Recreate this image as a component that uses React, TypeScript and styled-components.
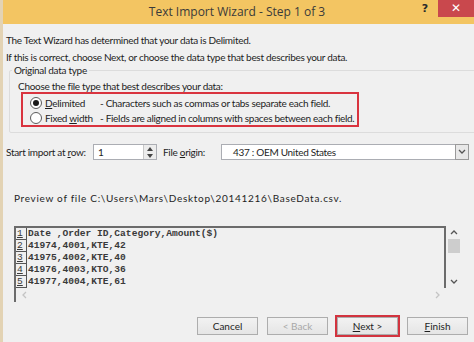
import React from 'react';
import styled, { createGlobalStyle } from 'styled-components';

const GlobalStyle = createGlobalStyle`
  html, body {
    margin: 0;
    padding: 0;
    overflow: hidden;
    background: #f0f0f0;
  }
  * { box-sizing: border-box; }
`;

const Window = styled.div`
  width: 474px;
  height: 342px;
  display: flex;
  flex-direction: column;
  background: #f0f0f0;
  border-left: 3px solid #e3d3b4;
  font-family: 'Lato', 'Liberation Sans', sans-serif;
  font-size: 10px;
  letter-spacing: -0.3px;
  color: #1e1e1e;
  overflow: hidden;
`;

const TitleBar = styled.div`
  height: 24px;
  flex: none;
  display: grid;
  grid-template-columns: 1fr auto 1fr;
  align-items: start;
  background: #f3c562;
  margin-left: -3px;
  letter-spacing: 0;
`;

const Title = styled.div`
  grid-column: 2;
  font-family: 'Open Sans', sans-serif;
  font-size: 12px;
  line-height: 24px;
  color: #3a3a3a;
`;

const TitleControls = styled.div`
  grid-column: 3;
  justify-self: end;
  display: flex;
  align-items: flex-start;
`;

const HelpButton = styled.div`
  width: 26px;
  height: 17px;
  font-family: 'DejaVu Sans', sans-serif;
  font-weight: bold;
  font-size: 11px;
  line-height: 17px;
  text-align: center;
  color: #2a2a2a;
`;

const CloseButton = styled.div`
  width: 36px;
  height: 17px;
  background: #c9484d;
  color: #fff;
  font-family: 'DejaVu Sans', sans-serif;
  font-weight: bold;
  font-size: 12px;
  line-height: 17px;
  text-align: center;
`;

const Body = styled.div`
  flex: 1;
  display: flex;
  flex-direction: column;
  padding: 8px 0 0 3px;
`;

const Line = styled.div`
  height: 17px;
  line-height: 17px;
  white-space: nowrap;
`;

const GroupBox = styled.fieldset`
  margin: -3px -12px 0 3px;
  padding: 0 0 5px 0;
  border: 1px solid #dcdcdc;
  border-radius: 2px;
  min-width: 0;
`;

const Legend = styled.legend`
  padding: 0 2px;
  margin-left: 2px;
  line-height: 14px;
  color: #1e1e1e;
`;

const GroupHint = styled.div`
  margin: 3px 0 0 8px;
  height: 12px;
  line-height: 12px;
  white-space: nowrap;
`;

const Highlight = styled.div`
  margin: 0 0 0 11px;
  width: 338px;
  border: 2px solid #d9343f;
  padding: 1px 0 0 7px;
  display: flex;
  flex-direction: column;
`;

const RadioRow = styled.label`
  display: flex;
  align-items: center;
  height: 15px;
  white-space: nowrap;
`;

const RadioCircle = styled.span<{ $checked?: boolean }>`
  width: 12px;
  height: 12px;
  border-radius: 50%;
  border: 1px solid #5c5c5c;
  background: #fff;
  display: flex;
  align-items: center;
  justify-content: center;
  margin-right: 3px;
  &::after {
    content: '';
    width: 6px;
    height: 6px;
    border-radius: 50%;
    background: ${(p) => (p.$checked ? '#1a1a1a' : 'transparent')};
  }
`;

const RadioLabel = styled.span`
  width: 55px;
`;

const U = styled.span`
  text-decoration: underline;
`;

const OptionsRow = styled.div`
  display: flex;
  align-items: center;
  height: 18px;
  margin-top: 10px;
  white-space: nowrap;
`;

const RowLabel = styled.span`
  width: 87px;
`;

const SpinBox = styled.div`
  width: 64px;
  height: 16px;
  background: #fff;
  border: 1px solid #abadb3;
  display: flex;
  align-items: center;
  padding-left: 4px;
`;

const SpinValue = styled.span`
  flex: 1;
`;

const SpinButtons = styled.div`
  width: 13px;
  height: 14px;
  display: flex;
  flex-direction: column;
  border-left: 1px solid #c8c8c8;
  background: #ececec;
`;

const SpinArrow = styled.div`
  flex: 1;
  display: flex;
  align-items: center;
  justify-content: center;
`;

const OriginLabel = styled.span`
  margin-left: 6px;
  width: 58px;
`;

const Select = styled.div`
  width: 248px;
  height: 16px;
  background: #fff;
  border: 1px solid #abadb3;
  display: flex;
  align-items: center;
  padding-left: 11px;
`;

const SelectText = styled.span`
  flex: 1;
`;

const DropButton = styled.div`
  width: 14px;
  height: 16px;
  margin-right: -1px;
  border: 1px solid #9a9a9a;
  background: #e8e8e8;
  display: flex;
  align-items: center;
  justify-content: center;
`;

const PreviewLabel = styled.div`
  margin: 29px 0 0 8px;
  height: 16px;
  line-height: 16px;
  white-space: nowrap;
  letter-spacing: 0.7px;
`;

const PreviewFrame = styled.div`
  margin: 20px 0 0 8px;
  width: 448px;
  height: 76px;
  display: grid;
  grid-template-columns: 432px 16px;
  grid-template-rows: 62px 14px;
`;

const DataArea = styled.div`
  border-top: 2px solid #6b6b6b;
  border-left: 2px solid #6b6b6b;
  border-right: 2px solid #6b6b6b;
  font-family: 'Liberation Mono', 'Courier New', monospace;
  font-size: 9.6px;
  font-weight: bold;
  letter-spacing: 0;
  color: #3a3a3a;
`;

const DataRow = styled.div`
  display: flex;
  height: 12px;
  line-height: 12px;
  white-space: pre;
`;

const RowNum = styled.span`
  width: 11px;
  border-right: 1px solid #555;
  border-bottom: 1px solid #555;
  text-decoration: underline;
  padding-left: 1px;
  margin-right: 1px;
  font-weight: normal;
`;

const VScroll = styled.div`
  display: flex;
  flex-direction: column;
  align-items: center;
  padding: 3px 0 2px;
`;

const Thumb = styled.div`
  width: 12px;
  height: 14px;
  background: #cdcdcd;
  margin-top: 2px;
`;

const VSpacer = styled.div`
  flex: 1;
`;

const HScroll = styled.div`
  display: flex;
  justify-content: space-between;
  align-items: center;
  padding: 0 4px 0 5px;
  border-left: 2px solid #6b6b6b;
`;

const ButtonBar = styled.div`
  display: flex;
  justify-content: flex-end;
  gap: 9px;
  margin-top: 15px;
  padding-right: 6px;
  letter-spacing: 0;
`;

const Button = styled.div<{ $disabled?: boolean; $focused?: boolean }>`
  width: 61px;
  height: 18px;
  border: 1px solid #adadad;
  background: linear-gradient(#f2f2f2, #e5e5e5);
  color: ${(p) => (p.$disabled ? '#a8a8a8' : '#1e1e1e')};
  text-align: center;
  line-height: 16px;
  outline: ${(p) => (p.$focused ? '2px solid #d2343f' : 'none')};
  outline-offset: 0px;
`;

const Chevron = ({ dir }: { dir: 'up' | 'down' | 'left' | 'right' }) => {
  const paths: Record<string, string> = {
    up: 'M1 5 L4 2 L7 5',
    down: 'M1 2 L4 5 L7 2',
    left: 'M5 1 L2 4 L5 7',
    right: 'M2 1 L5 4 L2 7',
  };
  return (
    <svg width="8" height="8" viewBox="0 0 8 8">
      <path d={paths[dir]} fill="none" stroke={dir === 'left' || dir === 'right' ? '#c4c4c4' : '#555'} strokeWidth="1.3" />
    </svg>
  );
};

const Tri = ({ up }: { up?: boolean }) => (
  <svg width="6" height="4" viewBox="0 0 6 4">
    <path d={up ? 'M0 4 L3 0 L6 4 Z' : 'M0 0 L3 4 L6 0 Z'} fill="#444" />
  </svg>
);

const rows = [
  'Date ,Order ID,Category,Amount($)',
  '41974,4001,KTE,42',
  '41975,4002,KTE,40',
  '41976,4003,KTO,36',
  '41977,4004,KTE,61',
];

export default function App() {
  return (
    <>
      <GlobalStyle />
      <Window>
        <TitleBar>
          <Title>Text Import Wizard - Step 1 of 3</Title>
          <TitleControls>
            <HelpButton>?</HelpButton>
            <CloseButton>✕</CloseButton>
          </TitleControls>
        </TitleBar>
        <Body>
          <Line>The Text Wizard has determined that your data is Delimited.</Line>
          <Line>If this is correct, choose Next, or choose the data type that best describes your data.</Line>
          <GroupBox>
            <Legend>Original data type</Legend>
            <GroupHint>Choose the file type that best describes your data:</GroupHint>
            <Highlight>
              <RadioRow>
                <RadioCircle $checked />
                <RadioLabel>
                  <U>D</U>elimited
                </RadioLabel>
                - Characters such as commas or tabs separate each field.
              </RadioRow>
              <RadioRow>
                <RadioCircle />
                <RadioLabel>
                  Fixed <U>w</U>idth
                </RadioLabel>
                - Fields are aligned in columns with spaces between each field.
              </RadioRow>
            </Highlight>
          </GroupBox>
          <OptionsRow>
            <RowLabel>
              Start import at <U>r</U>ow:
            </RowLabel>
            <SpinBox>
              <SpinValue>1</SpinValue>
              <SpinButtons>
                <SpinArrow>
                  <Tri up />
                </SpinArrow>
                <SpinArrow>
                  <Tri />
                </SpinArrow>
              </SpinButtons>
            </SpinBox>
            <OriginLabel>
              File <U>o</U>rigin:
            </OriginLabel>
            <Select>
              <SelectText>437 : OEM United States</SelectText>
              <DropButton>
                <Chevron dir="down" />
              </DropButton>
            </Select>
          </OptionsRow>
          <PreviewLabel>Preview of file C:\Users\Mars\Desktop\20141216\BaseData.csv.</PreviewLabel>
          <PreviewFrame>
            <DataArea>
              {rows.map((r, i) => (
                <DataRow key={i}>
                  <RowNum>{i + 1}</RowNum>
                  {r}
                </DataRow>
              ))}
            </DataArea>
            <VScroll>
              <Chevron dir="up" />
              <Thumb />
              <VSpacer />
              <Chevron dir="down" />
            </VScroll>
            <HScroll>
              <Chevron dir="left" />
              <Chevron dir="right" />
            </HScroll>
          </PreviewFrame>
          <ButtonBar>
            <Button>Cancel</Button>
            <Button $disabled>&lt; Back</Button>
            <Button $focused>
              <U>N</U>ext &gt;
            </Button>
            <Button>
              <U>F</U>inish
            </Button>
          </ButtonBar>
        </Body>
      </Window>
    </>
  );
}
